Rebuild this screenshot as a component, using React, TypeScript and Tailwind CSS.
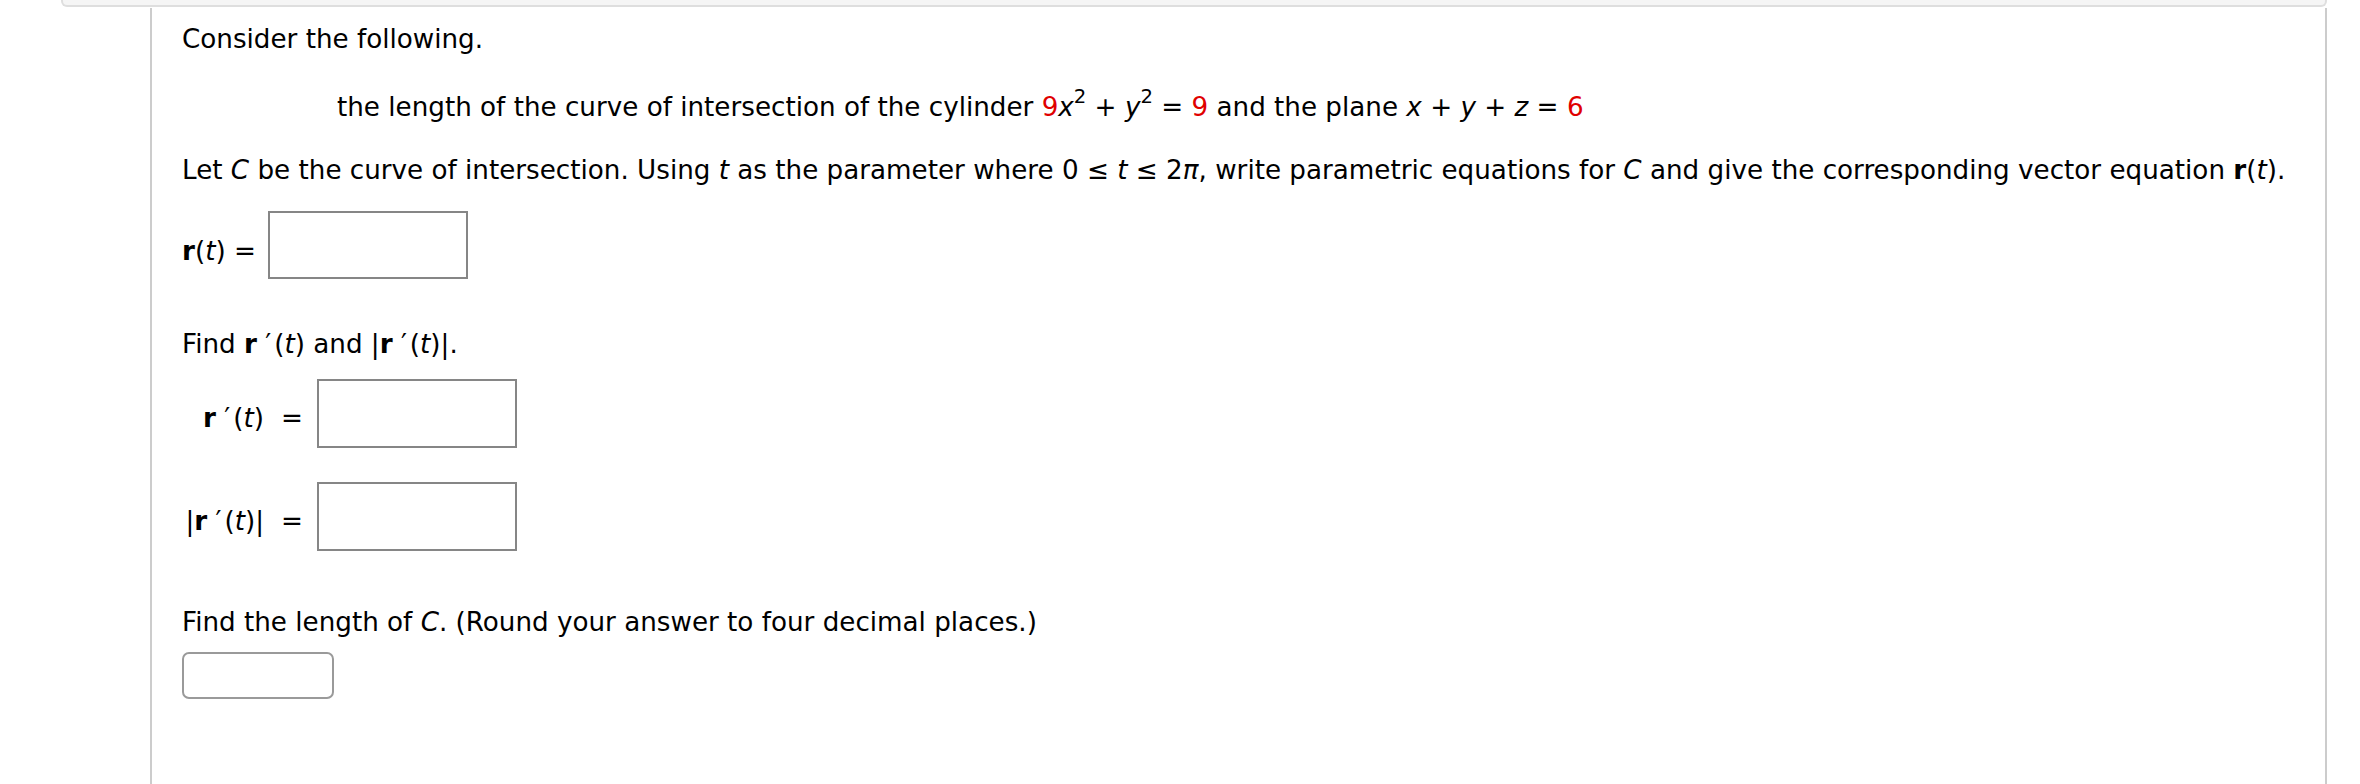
import React from 'react';

const red = 'text-[#e00000]';

function Answer({ className = '' }: { className?: string }) {
  return <div className={`w-[200px] h-[69px] border-2 border-[#868686] bg-white shrink-0 ${className}`} />;
}

function Bold({ children }: { children: React.ReactNode }) {
  return <b className="font-bold">{children}</b>;
}

function I({ children }: { children: React.ReactNode }) {
  return <i className="italic">{children}</i>;
}

function Sq() {
  return <sup className="top-[-13px]">2</sup>;
}

// r′(t) with the loose prime spacing the page uses
function RPrime() {
  return (
    <>
      <Bold>r</Bold> <span className="mr-[3px]">′</span>(<I>t</I>)
    </>
  );
}

export default function App() {
  return (
    <div className="min-h-[784px] bg-white text-black text-[26.2px] leading-[36px]" style={{ fontFamily: '"DejaVu Sans", Verdana, sans-serif' }}>
      <div className="ml-[61px] w-[2266px]">
        {/* tail of the header bar above the question */}
        <div className="h-[7px] bg-[#f5f5f5] border-x-2 border-b-2 border-[#dedede] rounded-b-[6px]" />

        <div className="mt-[1px] ml-[89px] border-x-2 border-[#cccccc] min-h-[776px] pl-[30px] pt-[13px]">
          <p>Consider the following.</p>

          <p className="mt-[32px] pl-[155px]">
            the length of the curve of intersection of the cylinder <span className={red}>9</span>
            <I>x</I>
            <Sq /> + <I>y</I>
            <Sq /> = <span className={red}>9</span> and the plane <I>x</I> + <I>y</I> + <I>z</I> ={' '}
            <span className={red}>6</span>
          </p>

          <p className="mt-[27px]">
            Let <I>C</I> be the curve of intersection. Using <I>t</I> as the parameter where 0 ≤ <I>t</I> ≤ 2<I>π</I>, write
            parametric equations for <I>C</I> and give the corresponding vector equation <Bold>r</Bold>(<I>t</I>).
          </p>

          <div className="mt-[23px] flex items-start">
            <span className="mt-[22px]">
              <Bold>r</Bold>(<I>t</I>) =
            </span>
            <div className="ml-[12px] w-[200px] h-[68px] border-2 border-[#868686]" />
          </div>

          <p className="mt-[47px]">
            Find <RPrime /> and |<RPrime />|.
          </p>

          <div className="mt-[17px] flex items-start">
            <span className="mt-[21px] w-[82px] text-right whitespace-nowrap">
              <RPrime />
            </span>
            <span className="mt-[21px] ml-[17px]">=</span>
            <Answer className="ml-[14px]" />
          </div>

          <div className="mt-[34px] flex items-start">
            <span className="mt-[21px] w-[82px] text-right whitespace-nowrap">
              |<RPrime />|
            </span>
            <span className="mt-[21px] ml-[17px]">=</span>
            <Answer className="ml-[14px]" />
          </div>

          <p className="mt-[53px]">
            Find the length of <I>C</I>. (Round your answer to four decimal places.)
          </p>

          <div className="mt-[12px] w-[152px] h-[47px] border-2 border-[#9a9a9a] rounded-[7px]" />
        </div>
      </div>
    </div>
  );
}
